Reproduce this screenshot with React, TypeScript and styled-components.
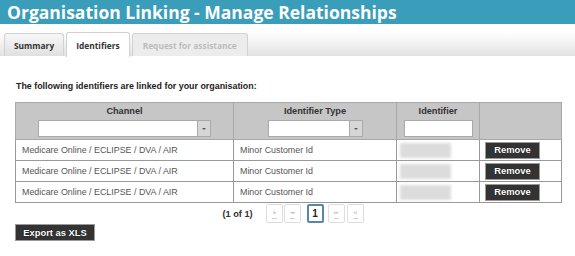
import React from "react";
import styled, { createGlobalStyle } from "styled-components";

const Global = createGlobalStyle`
  html, body { margin: 0; padding: 0; background: #fff; }
  body { font-family: "Liberation Sans", Arial, sans-serif; width: 575px; height: 256px; overflow: hidden; }
`;

const Header = styled.header`
  height: 24px;
  background: #3a9db9;
  padding-left: 7px;
  display: flex;
  align-items: center;
`;

const Title = styled.h1`
  margin: 0;
  font-family: "Open Sans", sans-serif;
  font-weight: 700;
  font-size: 17.5px;
  line-height: 24px;
  color: #fff;
`;

const TabBar = styled.nav`
  margin-top: 8px;
  height: 24px;
  background: linear-gradient(#ffffff, #e2e2e2);
  display: flex;
  align-items: flex-end;
  padding-left: 4px;
  gap: 2px;
`;

const Tab = styled.div<{ $state: "normal" | "active" | "disabled" }>`
  box-sizing: border-box;
  height: ${(p) => (p.$state === "active" ? "25px" : "23px")};
  margin-bottom: ${(p) => (p.$state === "active" ? "-1px" : "0")};
  padding: 0 ${(p) => (p.$state === "disabled" ? "10px" : "9px")};
  display: flex;
  align-items: center;
  font-family: "Open Sans", sans-serif;
  font-weight: 700;
  font-size: 8.4px;
  border: 1px solid #d2d2d2;
  border-bottom: none;
  border-radius: 3px 3px 0 0;
  color: ${(p) => (p.$state === "disabled" ? "#bdbdbd" : "#333")};
  background: ${(p) =>
    p.$state === "active"
      ? "#fff"
      : p.$state === "disabled"
      ? "#ececec"
      : "linear-gradient(#f7f7f7, #e0e0e0)"};
`;

const Content = styled.main`
  padding: 0 15px;
`;

const Intro = styled.p`
  margin: 24px 0 0 1px;
  font-size: 8.9px;
  font-weight: 700;
  line-height: 12px;
  color: #222;
`;

const Table = styled.table`
  margin-top: 10px;
  width: 543px;
  border-collapse: collapse;
  border: 1px solid #999;
  table-layout: fixed;
`;

const Th = styled.th<{ $w: number }>`
  width: ${(p) => p.$w}px;
  background: #c6c6c6;
  border: 1px solid #a8a8a8;
  padding: 3px 0 2px;
  vertical-align: top;
  font-size: 9.2px;
  line-height: 11px;
  color: #333;
  font-weight: 700;
  height: 29px;
`;

const FilterRow = styled.div`
  display: flex;
  justify-content: center;
  margin-top: 3px;
`;

const FilterInput = styled.div<{ $w: number }>`
  box-sizing: border-box;
  width: ${(p) => p.$w}px;
  height: 17px;
  background: #fff;
  border: 1px solid #a9a9a9;
`;

const DropButton = styled.div`
  box-sizing: border-box;
  width: 13px;
  height: 17px;
  background: #d6d6d6;
  border: 1px solid #a9a9a9;
  border-left: none;
  display: flex;
  align-items: center;
  justify-content: center;
  &::after {
    content: "";
    border-left: 2px solid transparent;
    border-right: 2px solid transparent;
    border-top: 2px solid #4a5b6b;
  }
`;

const Td = styled.td`
  border: 1px solid #999;
  height: 20px;
  padding: 0 0 0 6px;
  font-size: 8.9px;
  color: #555;
  white-space: nowrap;
`;

const TdTight = styled(Td)`
  padding-left: 3px;
`;

const ActionTd = styled(Td)`
  padding-left: 5px;
`;

const Blurred = styled.div`
  width: 51px;
  height: 15px;
  background: #dcdcdc;
  filter: blur(1.5px);
`;

const DarkButton = styled.button<{ $w: number }>`
  box-sizing: border-box;
  width: ${(p) => p.$w}px;
  height: 17px;
  padding: 0;
  background: #333;
  border: 1px solid #9a9a9a;
  color: #fff;
  font-family: "Liberation Sans", Arial, sans-serif;
  font-weight: 700;
  font-size: 9.4px;
  line-height: 14px;
  text-shadow: 0 0 1px #000;
  display: block;
`;

const Pager = styled.div`
  display: flex;
  align-items: center;
  justify-content: center;
  margin-top: 1px;
  padding-left: 13px;
  width: 543px;
  box-sizing: border-box;
  height: 19px;
`;

const PagerInfo = styled.span`
  font-size: 9.2px;
  font-weight: 700;
  color: #333;
  margin-right: 13px;
`;

const PageBtn = styled.div<{ $gapRight: number }>`
  box-sizing: border-box;
  width: 17px;
  height: 19px;
  border: 1px solid #dedede;
  border-radius: 2px;
  margin-right: ${(p) => p.$gapRight}px;
  display: flex;
  flex-direction: column;
  align-items: center;
  justify-content: center;
  color: #c4c4c4;
  font-size: 5px;
  line-height: 6px;
  letter-spacing: -1px;
  &::after {
    content: "";
    width: 5px;
    height: 1px;
    background: #d4d4d4;
    margin-top: 3px;
  }
`;

const PageCurrent = styled.div`
  box-sizing: border-box;
  width: 17px;
  height: 19px;
  border: 2px solid #5b87a6;
  border-radius: 2px;
  margin-right: 4px;
  display: flex;
  align-items: center;
  justify-content: center;
  font-size: 10px;
  font-weight: 700;
  color: #222;
`;

const ExportWrap = styled.div`
  margin-top: 1px;
`;

const rows = [0, 1, 2];

export default function App() {
  return (
    <>
      <Global />
      <Header>
        <Title>Organisation Linking - Manage Relationships</Title>
      </Header>
      <TabBar>
        <Tab $state="normal">Summary</Tab>
        <Tab $state="active">Identifiers</Tab>
        <Tab $state="disabled">Request for assistance</Tab>
      </TabBar>
      <Content>
        <Intro>The following identifiers are linked for your organisation:</Intro>
        <Table>
          <thead>
            <tr>
              <Th $w={217}>
                Channel
                <FilterRow>
                  <FilterInput $w={160} />
                  <DropButton />
                </FilterRow>
              </Th>
              <Th $w={162}>
                Identifier Type
                <FilterRow>
                  <FilterInput $w={82} />
                  <DropButton />
                </FilterRow>
              </Th>
              <Th $w={82}>
                Identifier
                <FilterRow>
                  <FilterInput $w={69} />
                </FilterRow>
              </Th>
              <Th $w={81} />
            </tr>
          </thead>
          <tbody>
            {rows.map((r) => (
              <tr key={r}>
                <Td>Medicare Online / ECLIPSE / DVA / AIR</Td>
                <Td>Minor Customer Id</Td>
                <TdTight>
                  <Blurred />
                </TdTight>
                <ActionTd>
                  <DarkButton $w={55}>Remove</DarkButton>
                </ActionTd>
              </tr>
            ))}
          </tbody>
        </Table>
        <Pager>
          <PagerInfo>(1 of 1)</PagerInfo>
          <PageBtn $gapRight={1}>|◂</PageBtn>
          <PageBtn $gapRight={6}>◂◂</PageBtn>
          <PageCurrent>1</PageCurrent>
          <PageBtn $gapRight={2}>▸▸</PageBtn>
          <PageBtn $gapRight={0}>▸|</PageBtn>
        </Pager>
        <ExportWrap>
          <DarkButton $w={80}>Export as XLS</DarkButton>
        </ExportWrap>
      </Content>
    </>
  );
}
